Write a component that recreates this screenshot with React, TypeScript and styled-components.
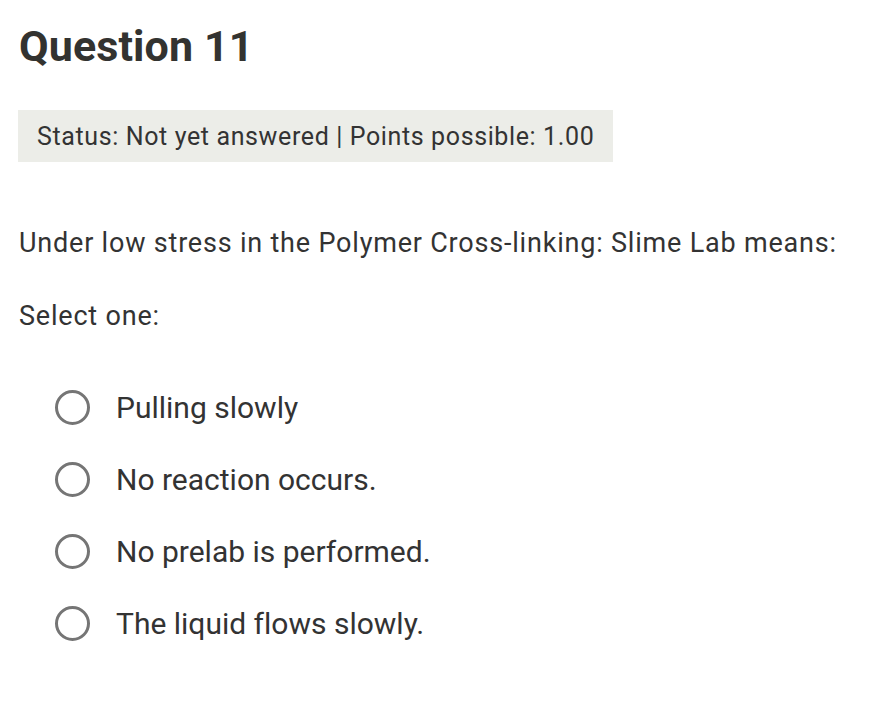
import React from "react";
import styled, { createGlobalStyle } from "styled-components";

const Global = createGlobalStyle`
  html, body { margin: 0; padding: 0; background: #ffffff; }
  body {
    font-family: Roboto, "Liberation Sans", sans-serif;
    color: #333333;
    font-variant-ligatures: none;
  }
`;

const Page = styled.div`
  padding: 20px 18px 0 18px;
  display: flex;
  flex-direction: column;
  align-items: flex-start;
`;

const Title = styled.h2`
  margin: 0;
  padding-left: 1px;
  font-size: 43px;
  line-height: 52px;
  font-weight: 700;
  letter-spacing: 0.1px;
  color: #333330;
`;

const StatusBox = styled.div`
  margin-top: 38px;
  background: #ecede8;
  padding: 0 19px;
  height: 52px;
  display: flex;
  align-items: center;
  font-size: 25px;
  letter-spacing: 0.62px;
  color: #333333;
`;

const QuestionText = styled.p`
  margin: 63px 0 0 1px;
  font-size: 27px;
  line-height: 36px;
  letter-spacing: 0.8px;
`;

const Hint = styled.p`
  margin: 37px 0 0 1px;
  font-size: 27px;
  line-height: 36px;
  letter-spacing: 0.8px;
`;

const Options = styled.div`
  margin-top: 55px;
  display: flex;
  flex-direction: column;
  gap: 36px;
  padding-left: 37px;
`;

const Option = styled.label`
  display: flex;
  align-items: center;
  gap: 26px;
  height: 36px;
  font-size: 30px;
  color: #333333;
`;

const Radio = styled.span`
  box-sizing: border-box;
  width: 35px;
  height: 35px;
  border: 3px solid #757575;
  border-radius: 50%;
  flex: none;
`;

const options = [
  "Pulling slowly",
  "No reaction occurs.",
  "No prelab is performed.",
  "The liquid flows slowly.",
];

export default function App() {
  return (
    <>
      <Global />
      <Page>
        <Title>Question 11</Title>
        <StatusBox>Status: Not yet answered | Points possible: 1.00</StatusBox>
        <QuestionText>
          Under low stress in the Polymer Cross-linking: Slime Lab means:
        </QuestionText>
        <Hint>Select one:</Hint>
        <Options>
          {options.map((o) => (
            <Option key={o}>
              <Radio />
              {o}
            </Option>
          ))}
        </Options>
      </Page>
    </>
  );
}
